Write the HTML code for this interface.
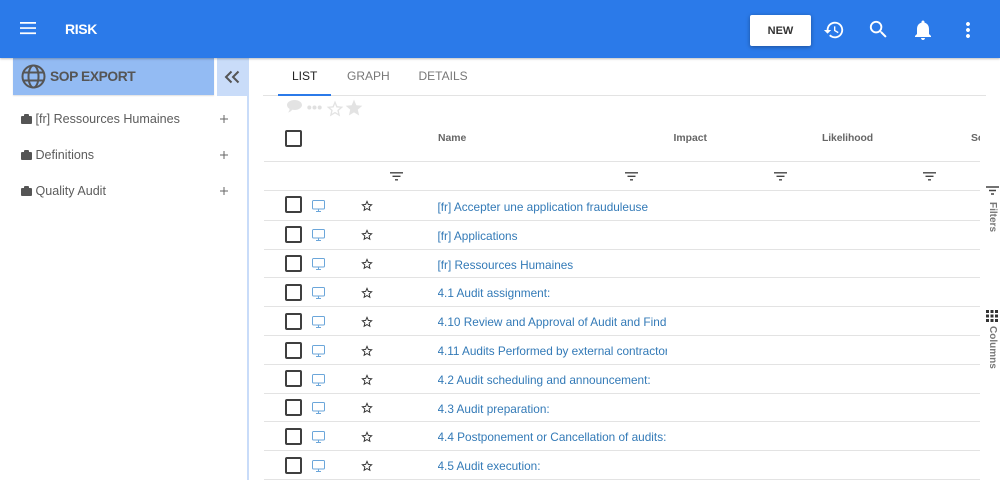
<!DOCTYPE html>
<html><head><meta charset="utf-8"><style>
html,body{margin:0;padding:0;width:1000px;height:480px;overflow:hidden;background:#fff;font-family:"Liberation Sans",sans-serif}
div,svg,span{position:absolute;white-space:nowrap}
.hl{left:264px;width:716px;height:1px;background:#e3e3e3}
.lnk{left:437.5px;font-size:11.8px;color:#337ab7;line-height:14px;overflow:hidden}
.cb{left:285px;width:13px;height:13px;border:2px solid #3f3f3f;border-radius:2px}
.side{left:35.5px;font-size:12.55px;color:#5c5c5c;line-height:14px}
.hd{top:132px;font-size:10.4px;font-weight:bold;color:#666;line-height:14px}
.tab{top:69px;font-size:12px;line-height:15px;color:#777}
</style></head><body>
<div style="left:0;top:0;width:1000px;height:58px;background:#2b7ae9;box-shadow:0 1px 2px rgba(0,0,0,.25);z-index:3"></div>
<div style="z-index:4;left:0;top:0;width:1000px;height:58px">
<svg style="left:20px;top:20px" width="16" height="16" viewBox="0 0 16 16"><path d="M0 2h16v1.7H0zM0 7.2h16v1.7H0zM0 12.4h16v1.7H0z" fill="#fff"/></svg>
<div style="left:65px;top:21px;font-size:14px;font-weight:bold;color:#fff;line-height:16px;letter-spacing:-.35px">RISK</div>
<div style="left:750px;top:15px;width:61px;height:31px;background:#fff;border-radius:2px;box-shadow:0 1px 4px rgba(0,0,0,.35);text-align:center;font-size:11px;font-weight:bold;color:#333;line-height:33px">NEW</div>
<svg style="left:823px;top:19px" width="22" height="22" viewBox="0 0 24 24"><path fill="#fff" d="M13 3a9 9 0 0 0-9 9H1l3.9 3.9.1.1L9 12H6a7 7 0 1 1 2.05 4.95l-1.42 1.42A9 9 0 1 0 13 3zm-1 5v5l4.25 2.52.77-1.28-3.52-2.09V8z"/></svg>
<svg style="left:867px;top:18px" width="23" height="23" viewBox="0 0 24 24"><path fill="#fff" d="M15.5 14h-.79l-.28-.27A6.47 6.47 0 0 0 16 9.5 6.5 6.5 0 1 0 9.5 16c1.61 0 3.09-.59 4.23-1.57l.27.28v.79l5 4.99L20.49 19l-4.99-5zm-6 0C7.01 14 5 11.99 5 9.5S7.01 5 9.5 5 14 7.01 14 9.5 11.99 14 9.5 14z"/></svg>
<svg style="left:911px;top:18px" width="24" height="24" viewBox="0 0 24 24"><path fill="#fff" d="M12 22c1.1 0 2-.9 2-2h-4c0 1.1.9 2 2 2zm6-6v-5c0-3.07-1.63-5.64-4.5-6.32V4c0-.83-.67-1.5-1.5-1.5s-1.5.67-1.5 1.5v.68C7.64 5.36 6 7.92 6 11v5l-2 2v1h16v-1l-2-2z"/></svg>
<svg style="left:956px;top:18px" width="24" height="24" viewBox="0 0 24 24"><path fill="#fff" d="M12 8c1.1 0 2-.9 2-2s-.9-2-2-2-2 .9-2 2 .9 2 2 2zm0 2c-1.1 0-2 .9-2 2s.9 2 2 2 2-.9 2-2-.9-2-2-2zm0 6c-1.1 0-2 .9-2 2s.9 2 2 2 2-.9 2-2-.9-2-2-2z"/></svg>
</div>

<div style="left:13px;top:58px;width:201px;height:37px;background:#93bbf3;box-shadow:0 1px 1px rgba(0,0,0,.12)"></div>
<svg style="left:21px;top:63.5px" width="25" height="25" viewBox="0 0 25 25" fill="none" stroke="#555" stroke-width="2"><circle cx="12.5" cy="12.5" r="11"/><ellipse cx="12.5" cy="12.5" rx="5" ry="11"/><path d="M2.5 8.5h20M2.5 16.5h20"/></svg>
<div style="left:50px;top:69px;font-size:13.8px;font-weight:bold;color:#555;line-height:16px;letter-spacing:-.42px">SOP EXPORT</div>
<div style="left:217px;top:58px;width:30px;height:38px;background:#c9dcf9"></div>
<div style="left:247px;top:58px;width:2px;height:422px;background:#c9dcf9"></div>
<svg style="left:224px;top:70px" width="16" height="14" viewBox="0 0 16 14" fill="none" stroke="#555" stroke-width="2"><path d="M7.5 1.500L2 7l5.500 5.500M14.500 1.500L9 7l5.500 5.500"/></svg>

<svg style="left:21px;top:114px" width="11" height="10" viewBox="0 0 11 10"><path fill="#555" d="M4 0h3a1 1 0 0 1 1 1v1h2a1 1 0 0 1 1 1v6a1 1 0 0 1-1 1H1a1 1 0 0 1-1-1V3a1 1 0 0 1 1-1h2V1a1 1 0 0 1 1-1z"/></svg>
<div class="side" style="top:112px">[fr] Ressources Humaines</div>
<svg style="left:220px;top:115px" width="8" height="8"><path d="M4 0v8M0 4h8" stroke="#666"/></svg>
<svg style="left:21px;top:150px" width="11" height="10" viewBox="0 0 11 10"><path fill="#555" d="M4 0h3a1 1 0 0 1 1 1v1h2a1 1 0 0 1 1 1v6a1 1 0 0 1-1 1H1a1 1 0 0 1-1-1V3a1 1 0 0 1 1-1h2V1a1 1 0 0 1 1-1z"/></svg>
<div class="side" style="top:148px">Definitions</div>
<svg style="left:220px;top:151px" width="8" height="8"><path d="M4 0v8M0 4h8" stroke="#666"/></svg>
<svg style="left:21px;top:186px" width="11" height="10" viewBox="0 0 11 10"><path fill="#555" d="M4 0h3a1 1 0 0 1 1 1v1h2a1 1 0 0 1 1 1v6a1 1 0 0 1-1 1H1a1 1 0 0 1-1-1V3a1 1 0 0 1 1-1h2V1a1 1 0 0 1 1-1z"/></svg>
<div class="side" style="top:184px">Quality Audit</div>
<svg style="left:220px;top:187px" width="8" height="8"><path d="M4 0v8M0 4h8" stroke="#666"/></svg>

<div class="tab" style="left:292px;color:#222">LIST</div>
<div class="tab" style="left:347px">GRAPH</div>
<div class="tab" style="left:418.5px">DETAILS</div>
<div class="hl" style="top:95px;left:263px;width:723px"></div>
<div style="left:278px;top:94px;width:53px;height:2px;background:#2b7ae9"></div>

<svg style="left:287px;top:100px" width="15" height="13" viewBox="0 0 15 13"><path fill="#e3e3e3" d="M7.5 0C11.6 0 15 2.2 15 5s-3.4 5-7.5 5c-.8 0-1.500-.1-2.200-.2C4.300 11 2.700 12.200 1 12.500c.9-1 1.500-2 1.600-3.600C1 8 0 6.600 0 5 0 2.200 3.400 0 7.500 0z"/></svg>
<svg style="left:307px;top:105px" width="15" height="5"><circle cx="2.300" cy="2.500" r="2" fill="#e0e0e0"/><circle cx="7.500" cy="2.500" r="2" fill="#e0e0e0"/><circle cx="12.700" cy="2.500" r="2" fill="#e0e0e0"/></svg>
<svg style="left:325px;top:99px" width="20" height="20" viewBox="0 0 24 24"><path fill="#e3e3e3" d="M22 9.240l-7.190-.62L12 2 9.190 8.630 2 9.240l5.460 4.730L5.820 21 12 17.270 18.180 21l-1.630-7.030L22 9.240zM12 15.400l-3.760 2.270 1-4.280-3.320-2.880 4.380-.38L12 6.100l1.710 4.040 4.380.38-3.320 2.880 1 4.280L12 15.400z"/></svg>
<svg style="left:344px;top:98px" width="20" height="20" viewBox="0 0 24 24"><path fill="#e3e3e3" d="M12 17.270L18.180 21l-1.640-7.030L22 9.240l-7.190-.61L12 2 9.190 8.630 2 9.240l5.460 4.730L5.820 21z"/></svg>

<div class="cb" style="top:130px"></div>
<div class="hd" style="left:438px">Name</div>
<div class="hd" style="left:673.500px">Impact</div>
<div class="hd" style="left:822px;letter-spacing:-.1px">Likelihood</div>
<div class="hd" style="left:971px;width:9px;overflow:hidden">Score</div>
<div class="hl" style="top:161px"></div>
<svg style="left:390px;top:172px" width="13" height="9"><path d="M0 .8h13M2.500 4.300h8M5 7.800h3" stroke="#444" stroke-width="1.300"/></svg>
<svg style="left:625px;top:172px" width="13" height="9"><path d="M0 .8h13M2.500 4.300h8M5 7.800h3" stroke="#444" stroke-width="1.300"/></svg>
<svg style="left:774px;top:172px" width="13" height="9"><path d="M0 .8h13M2.500 4.300h8M5 7.800h3" stroke="#444" stroke-width="1.300"/></svg>
<svg style="left:923px;top:172px" width="13" height="9"><path d="M0 .8h13M2.500 4.300h8M5 7.800h3" stroke="#444" stroke-width="1.300"/></svg>
<div class="hl" style="top:190px"></div>

<div class="hl" style="top:220px"></div><div class="hl" style="top:249px"></div><div class="hl" style="top:277px"></div><div class="hl" style="top:306px"></div><div class="hl" style="top:335px"></div><div class="hl" style="top:364px"></div><div class="hl" style="top:393px"></div><div class="hl" style="top:421px"></div><div class="hl" style="top:450px"></div><div class="hl" style="top:479px"></div>

<div class="cb" style="top:196px"></div><div class="cb" style="top:226px"></div><div class="cb" style="top:255px"></div><div class="cb" style="top:284px"></div><div class="cb" style="top:313px"></div><div class="cb" style="top:342px"></div><div class="cb" style="top:370px"></div><div class="cb" style="top:399px"></div><div class="cb" style="top:428px"></div><div class="cb" style="top:457px"></div>

<svg width="0" height="0"><defs>
<g id="m"><path fill="none" stroke="#6ba6da" stroke-width="1" d="M.5 1.500a1 1 0 0 1 1-1h10a1 1 0 0 1 1 1v6.500a1 1 0 0 1-1 1h-10a1 1 0 0 1-1-1zM4 11.500h5M6.500 9v2"/></g>
<path id="s" fill="#333" d="M22 9.240l-7.190-.62L12 2 9.190 8.630 2 9.240l5.460 4.730L5.820 21 12 17.270 18.180 21l-1.630-7.030L22 9.240zM12 15.400l-3.760 2.270 1-4.280-3.320-2.880 4.380-.38L12 6.100l1.710 4.040 4.380.38-3.320 2.880 1 4.280L12 15.400z"/>
</defs></svg>

<svg style="left:312px;top:200px" width="13" height="12"><use href="#m"/></svg><svg style="left:312px;top:229px" width="13" height="12"><use href="#m"/></svg><svg style="left:312px;top:258px" width="13" height="12"><use href="#m"/></svg><svg style="left:312px;top:287px" width="13" height="12"><use href="#m"/></svg><svg style="left:312px;top:316px" width="13" height="12"><use href="#m"/></svg><svg style="left:312px;top:345px" width="13" height="12"><use href="#m"/></svg><svg style="left:312px;top:374px" width="13" height="12"><use href="#m"/></svg><svg style="left:312px;top:402px" width="13" height="12"><use href="#m"/></svg><svg style="left:312px;top:431px" width="13" height="12"><use href="#m"/></svg><svg style="left:312px;top:460px" width="13" height="12"><use href="#m"/></svg>

<svg style="left:360px;top:199px" width="14" height="14" viewBox="0 0 24 24"><use href="#s"/></svg><svg style="left:360px;top:228px" width="14" height="14" viewBox="0 0 24 24"><use href="#s"/></svg><svg style="left:360px;top:257px" width="14" height="14" viewBox="0 0 24 24"><use href="#s"/></svg><svg style="left:360px;top:286px" width="14" height="14" viewBox="0 0 24 24"><use href="#s"/></svg><svg style="left:360px;top:315px" width="14" height="14" viewBox="0 0 24 24"><use href="#s"/></svg><svg style="left:360px;top:344px" width="14" height="14" viewBox="0 0 24 24"><use href="#s"/></svg><svg style="left:360px;top:373px" width="14" height="14" viewBox="0 0 24 24"><use href="#s"/></svg><svg style="left:360px;top:401px" width="14" height="14" viewBox="0 0 24 24"><use href="#s"/></svg><svg style="left:360px;top:430px" width="14" height="14" viewBox="0 0 24 24"><use href="#s"/></svg><svg style="left:360px;top:459px" width="14" height="14" viewBox="0 0 24 24"><use href="#s"/></svg>

<div class="lnk" style="top:200px">[fr] Accepter une application frauduleuse</div>
<div class="lnk" style="top:229px">[fr] Applications</div>
<div class="lnk" style="top:258px">[fr] Ressources Humaines</div>
<div class="lnk" style="top:286px">4.1 Audit assignment:</div>
<div class="lnk" style="top:315px;width:229.500px">4.10 Review and Approval of Audit and Findings</div>
<div class="lnk" style="top:344px;width:229.500px;letter-spacing:-.03px">4.11 Audits Performed by external contractors</div>
<div class="lnk" style="top:373px">4.2 Audit scheduling and announcement:</div>
<div class="lnk" style="top:402px">4.3 Audit preparation:</div>
<div class="lnk" style="top:430px">4.4 Postponement or Cancellation of audits:</div>
<div class="lnk" style="top:459px">4.5 Audit execution:</div>

<svg style="left:986px;top:186px" width="13" height="10"><path d="M0 1h13M3 4.500h7M5 8h3" stroke="#444" stroke-width="1.400"/></svg>
<div style="left:986px;top:202px;font-size:10px;font-weight:bold;color:#777;line-height:12px;writing-mode:vertical-rl">Filters</div>
<svg style="left:986px;top:310px" width="12" height="12"><path fill="#333" d="M0 0h3v3H0zM4.500 0h3v3h-3zM9 0h3v3H9zM0 4.500h3v3H0zM4.500 4.500h3v3h-3zM9 4.500h3v3H9zM0 9h3v3H0zM4.500 9h3v3h-3zM9 9h3v3H9z"/></svg>
<div style="left:986px;top:326px;font-size:10px;font-weight:bold;color:#777;line-height:12px;writing-mode:vertical-rl">Columns</div>
</body></html>
